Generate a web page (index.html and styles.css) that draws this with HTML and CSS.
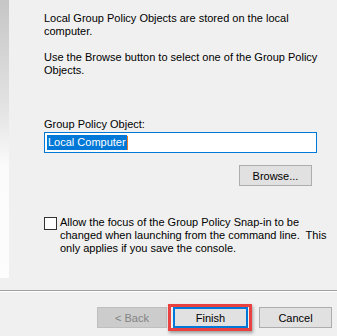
FILE: index.html
```html
<!DOCTYPE html>
<html lang="en">
<head>
  <meta charset="UTF-8" />
  <title>Select Group Policy Object</title>
  <link rel="stylesheet" href="styles.css">
</head>
<body>

  <div class="wizard">
    <div class="side"></div>
    <div class="content">
      <p>Local Group Policy Objects are stored on the local<br>computer.</p>
      <p>Use the Browse button to select one of the Group Policy<br>Objects.</p>

      <div class="gpo-label">Group Policy Object:</div>
      <div class="gpo-box"><span class="selected">Local Computer</span><span class="caret"></span></div>

      <div class="browse-row">
        <button class="btn">Browse...</button>
      </div>

      <label class="check-row">
        <span class="checkbox"></span>
        <span>Allow the focus of the Group Policy Snap-in to be<br>changed when launching from the command line.&nbsp; This<br>only applies if you save the console.</span>
      </label>
    </div>
  </div>

  <div class="separator"></div>

  <div class="footer">
    <button class="btn disabled">&lt; Back</button>
    <div class="highlight">
      <button class="btn default">Finish</button>
    </div>
    <button class="btn">Cancel</button>
  </div>

</body>
</html>
```

FILE: styles.css
```css
body {
  margin: 0;
  width: 337px;
  height: 336px;
  overflow: hidden;
  background: #f0f0f0;
  font-family: "Liberation Sans", Arial, sans-serif;
  font-size: 11px;
  line-height: 13px;
  color: #000;
}

.wizard {
  display: flex;
  height: 278px;
}

.side {
  width: 9px;
  background: linear-gradient(to bottom, #c6c6c6 0%, #e4e4e4 40%, #fbfbfb 60%, #fdfdfd 100%);
}

.content {
  flex: 1;
  padding: 12px 0 0 35px;
}

p {
  margin: 0 0 13px 0;
}

.gpo-label {
  margin-top: 41px;
}

.gpo-box {
  margin-top: 1px;
  width: 269px;
  height: 19px;
  border: 1px solid #0078d7;
  background: #fff;
  display: flex;
  align-items: center;
  padding-left: 2px;
}

.selected {
  background: #0078d7;
  color: #fff;
  line-height: 15px;
  padding: 0 1px;
}

.caret {
  width: 1px;
  height: 14px;
  background: #e87a2a;
}

.browse-row {
  display: flex;
  justify-content: flex-end;
  width: 268px;
  margin-top: 12px;
}

.btn {
  font-family: "Liberation Sans", Arial, sans-serif;
  font-size: 11px;
  width: 73px;
  height: 21px;
  padding: 0;
  background: #e1e1e1;
  border: 1px solid #adadad;
  color: #000;
}

.check-row {
  display: flex;
  gap: 3px;
  margin-top: 30px;
}

.checkbox {
  width: 11px;
  height: 11px;
  border: 1px solid #333;
  background: #fff;
  flex-shrink: 0;
  margin-top: 1px;
}

.separator {
  margin-top: 12px;
  height: 1px;
  background: #a0a0a0;
  border-bottom: 1px solid #fff;
}

.footer {
  display: flex;
  align-items: center;
  padding-left: 97px;
  margin-top: 12px;
}

.btn.disabled {
  width: 70px;
  background: #cccccc;
  border-color: #bfbfbf;
  color: #838383;
}

.highlight {
  border: 3px solid #e8413f;
  padding: 0 1px 0 2px;
  margin-left: 1px;
  box-shadow: 1px 2px 3px rgba(0, 0, 0, 0.35);
  display: flex;
}

.btn.default {
  width: 75px;
  border: 2px solid #0078d7;
}

.footer > .btn:last-child {
  margin-left: 7px;
}
```
